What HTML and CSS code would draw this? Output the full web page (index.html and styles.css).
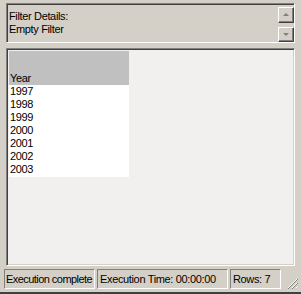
FILE: index.html
```html
<!DOCTYPE html>
<html lang="en">
<head>
  <meta charset="UTF-8" />
  <title>Query Results</title>
  <link rel="stylesheet" href="styles.css">
</head>
<body>
  <div class="window">
    <div class="filter">
      <div class="filter-text">
        <div>Filter Details:</div>
        <div>Empty Filter</div>
      </div>
      <div class="spin">
        <div class="spin-btn"><span class="arrow up"></span></div>
        <div class="spin-btn"><span class="arrow down"></span></div>
      </div>
    </div>

    <div class="grid">
      <table class="results">
        <thead>
          <tr><th>Year</th></tr>
        </thead>
        <tbody>
          <tr><td>1997</td></tr>
          <tr><td>1998</td></tr>
          <tr><td>1999</td></tr>
          <tr><td>2000</td></tr>
          <tr><td>2001</td></tr>
          <tr><td>2002</td></tr>
          <tr><td>2003</td></tr>
        </tbody>
      </table>
    </div>

    <div class="status">
      <div class="panel p-state">Execution complete</div>
      <div class="panel p-time">Execution Time: 00:00:00</div>
      <div class="panel p-rows">Rows: 7</div>
      <div class="grip">
        <svg width="12" height="12" viewBox="0 0 12 12">
          <path d="M11 2 L2 11 M11 6 L6 11 M11 10 L10 11" stroke="#fff" stroke-width="1"/>
          <path d="M12 2 L2 12 M12 6 L6 12" stroke="#808080" stroke-width="1"/>
        </svg>
      </div>
    </div>
  </div>
</body>
</html>
```

FILE: styles.css
```css
body {
  margin: 0;
  background-color: #d4d0c8;
  font-family: "Liberation Sans", Arial, sans-serif;
  font-size: 11px;
  letter-spacing: -0.35px;
  color: #000;
}

.window {
  width: 301px;
  height: 294px;
  padding: 3px 6px 0 6px;
  box-sizing: border-box;
  border-bottom: 2px solid #404040;
  display: flex;
  flex-direction: column;
}

.filter {
  height: 40px;
  display: flex;
  border-top: 1px solid #808080;
  border-left: 1px solid #808080;
  border-right: 1px solid #fff;
  border-bottom: 1px solid #fff;
  box-shadow: inset 1px 1px 0 #404040;
  box-sizing: border-box;
}

.filter-text {
  flex: 1;
  padding: 6px 0 0 2px;
  line-height: 13px;
}

.spin {
  width: 16px;
  padding: 3px 0 0 0;
  display: flex;
  flex-direction: column;
  gap: 4px;
}

.spin-btn {
  height: 16px;
  background-color: #d4d0c8;
  border-top: 1px solid #fff;
  border-left: 1px solid #fff;
  border-right: 1px solid #404040;
  border-bottom: 1px solid #404040;
  box-shadow: inset -1px -1px 0 #808080;
  box-sizing: border-box;
  display: flex;
  align-items: center;
  justify-content: center;
}

.arrow {
  width: 0;
  height: 0;
  border-left: 3px solid transparent;
  border-right: 3px solid transparent;
}

.arrow.up {
  border-bottom: 3px solid #808080;
}

.arrow.down {
  border-top: 3px solid #808080;
}

.grid {
  margin-top: 5px;
  height: 218px;
  background-color: #f1f0ee;
  border-top: 1px solid #808080;
  border-left: 1px solid #808080;
  border-right: 1px solid #fff;
  border-bottom: 1px solid #fff;
  box-shadow: inset 1px 1px 0 #404040, inset -1px -1px 0 #d4d0c8;
  box-sizing: border-box;
  padding: 2px;
}

.results {
  border-collapse: collapse;
  width: 120px;
}

.results th {
  background-color: #c0c0c0;
  height: 33px;
  font-weight: normal;
  text-align: left;
  vertical-align: bottom;
  padding: 0 0 1px 1px;
  line-height: 12px;
}

.results td {
  background-color: #fff;
  height: 13px;
  padding: 0 0 0 1px;
  line-height: 13px;
}

.results tbody tr:last-child td {
  height: 14px;
  vertical-align: top;
}

.status {
  margin-top: 3px;
  height: 20px;
  display: flex;
  gap: 2px;
  margin-left: -2px;
  margin-right: -3px;
}

.panel {
  border-top: 1px solid #808080;
  border-left: 1px solid #808080;
  border-right: 1px solid #fff;
  border-bottom: 1px solid #fff;
  box-sizing: border-box;
  padding: 3px 0 0 2px;
  line-height: 13px;
  white-space: nowrap;
}

.p-state {
  width: 91px;
  padding-left: 1px;
  letter-spacing: -0.55px;
}

.p-time {
  width: 131px;
}

.p-rows {
  width: 51px;
}

.grip {
  flex: 1;
  display: flex;
  align-items: flex-end;
  justify-content: flex-end;
}
```
